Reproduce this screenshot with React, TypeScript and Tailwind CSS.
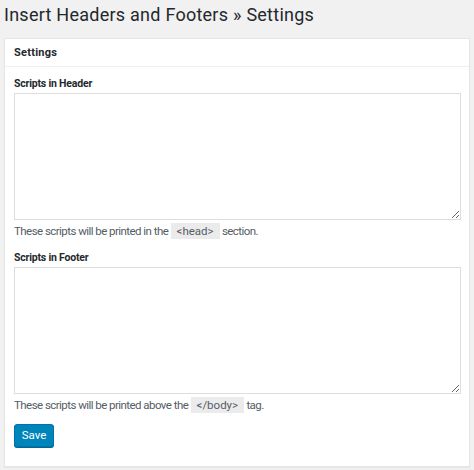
import React from 'react';

const font = { fontFamily: 'Roboto, "Noto Sans", sans-serif' };

const Field: React.FC<{ label: string; before: string; code: string; after: string }> = ({ label, before, code, after }) => (
    <div>
        <div className="text-[10.5px] font-bold text-[#23282d] leading-[14px] tracking-[-0.2px]">{label}</div>
        <textarea className="mt-[2px] block w-full h-[127px] bg-white border border-[#dddddd] resize-y" />
        <p className="mt-[3px] text-[11.5px] text-[#555d66] leading-[16px] tracking-[-0.55px]">
            {before}{' '}
            <code className="bg-[#ebebeb] px-[6px] py-[1px] text-[11.5px] tracking-[0px]" style={font}>{code}</code>{' '}
            {after}
        </p>
    </div>
);

export default function App() {
    return (
        <div className="w-[474px] h-[470px] bg-[#f1f1f1] px-[4px] pt-[3px] overflow-hidden" style={font}>
            <h1 className="text-[18px] leading-[24px] text-[#23282d] tracking-[0.25px]">Insert Headers and Footers » Settings</h1>
            <div className="mt-[11px] bg-white border border-[#e5e5e5] shadow-[0_1px_1px_rgba(0,0,0,0.04)]">
                <h2 className="px-[9px] pt-[6px] pb-[5px] text-[11px] font-bold leading-[16px] text-[#23282d] tracking-[0.25px] border-b border-[#eeeeee]">Settings</h2>
                <div className="pl-[9px] pr-[8px] pt-[10px] pb-[19px]">
                    <Field label="Scripts in Header" before="These scripts will be printed in the" code="<head>" after="section." />
                    <div className="mt-[12px]">
                        <Field label="Scripts in Footer" before="These scripts will be printed above the" code="</body>" after="tag." />
                    </div>
                    <button className="mt-[11px] block h-[23px] w-[40px] bg-[#0085ba] border border-[#0073aa] rounded-[3px] text-white text-[11.5px] shadow-[0_1px_0_#006799]">Save</button>
                </div>
            </div>
        </div>
    );
}
